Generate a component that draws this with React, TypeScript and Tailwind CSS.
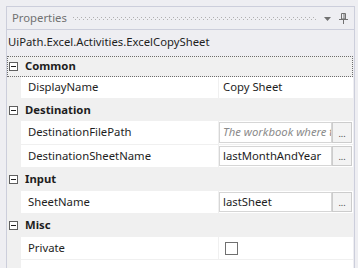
import React from 'react';

const font = { fontFamily: '"Segoe UI", "Noto Sans", sans-serif' };

const CategoryRow = ({ label, focused = false, h = 'h-[22px]' }: { label: string; focused?: boolean; h?: string }) => (
  <div className={`${h} flex items-center bg-[#f0f0f0] pl-[2px] ${focused ? 'outline-1 outline-dotted outline-[#6d6d6d] -outline-offset-1' : ''}`}>
    <div className="w-[9px] h-[9px] border border-[#5f5f5f] bg-white flex items-center justify-center">
      <div className="w-[5px] h-px bg-[#1e1e1e]" />
    </div>
    <span className="ml-[7px] text-[11.3px] font-bold text-[#1e1e1e]">{label}</span>
  </div>
);

const PropRow = ({ label, h = 'h-[22px]', children }: { label: string; h?: string; children?: React.ReactNode }) => (
  <div className={`${h} flex bg-[#f0f0f0]`}>
    <div className="w-[14px] shrink-0" />
    <div className="flex-1 min-w-0 flex bg-white border-b border-[#f0f0f0]">
      <div className="w-[198px] shrink-0 flex items-center pl-[7px] text-[11.3px] text-[#1e1e1e] border-r border-[#f0f0f0]">{label}</div>
      <div className="flex-1 min-w-0 flex items-center">{children}</div>
    </div>
  </div>
);

const TextBox = ({ children, italic = false }: { children: React.ReactNode; italic?: boolean }) => (
  <div className="flex-1 min-w-0 flex items-stretch h-full py-[1px] pr-[1px]">
    <div className={`flex-1 min-w-0 border border-[#d6d6d6] bg-white flex items-center pl-[3px] text-[11.3px] overflow-hidden whitespace-nowrap ${italic ? 'italic text-[#8a8a8a]' : 'text-[#1e1e1e]'}`}>
      {children}
    </div>
    <div className="w-[20px] shrink-0 border border-[#cccccc] bg-[#f3f3f3] flex items-end justify-center pb-[4px] text-[9px] leading-none text-[#444]">...</div>
  </div>
);

export default function App() {
  return (
    <div className="w-[358px] h-[268px] bg-[#eeeef2] pt-[6px] pl-[6px] pr-[3px] overflow-hidden" style={font}>
      <div className="h-full border-l border-t border-r border-[#cccedb] flex flex-col">
        <div className="h-[23px] flex items-center pt-[1px] pl-[5px] pr-[6px] gap-[6px] border-b border-[#cccedb]">
          <span className="text-[11.3px] text-[#717171]">Properties</span>
          <svg className="flex-1 h-[4px]" preserveAspectRatio="none">
            <defs>
              <pattern id="grip" width="4" height="4" patternUnits="userSpaceOnUse">
                <rect x="0" y="0" width="1" height="1" fill="#b0b0b0" />
                <rect x="2" y="2" width="1" height="1" fill="#b0b0b0" />
              </pattern>
            </defs>
            <rect width="100%" height="100%" fill="url(#grip)" />
          </svg>
          <svg width="7" height="4" viewBox="0 0 7 4" className="ml-[2px]">
            <path d="M0 0 H7 L3.5 4 Z" fill="#717171" />
          </svg>
          <svg width="9" height="11" viewBox="0 0 9 11" className="ml-[2px]">
            <path d="M2.5 0.5 H6.5 V6 H2.5 Z" fill="none" stroke="#717171" />
            <path d="M5 1 V6" stroke="#717171" />
            <path d="M0 6.5 H9" stroke="#717171" />
            <path d="M4.5 7 V11" stroke="#717171" />
          </svg>
        </div>
        <div className="h-[26px] flex items-center pb-[2px] pl-[1px] text-[11.3px] text-[#1e1e1e] whitespace-nowrap">
          UiPath.Excel.Activities.ExcelCopySheet
        </div>
        <div className="flex-1 flex flex-col mr-[1px] bg-white">
          <CategoryRow label="Common" focused h="h-[21px]" />
          <PropRow label="DisplayName">
            <span className="pl-[4px] text-[11.3px] text-[#1e1e1e]">Copy Sheet</span>
          </PropRow>
          <CategoryRow label="Destination" />
          <PropRow label="DestinationFilePath" h="h-[24px]">
            <TextBox italic>The workbook where the sheet will be copied</TextBox>
          </PropRow>
          <PropRow label="DestinationSheetName" h="h-[23px]">
            <TextBox>lastMonthAndYear</TextBox>
          </PropRow>
          <CategoryRow label="Input" h="h-[23px]" />
          <PropRow label="SheetName" h="h-[23px]">
            <TextBox>lastSheet</TextBox>
          </PropRow>
          <CategoryRow label="Misc" h="h-[23px]" />
          <PropRow label="Private" h="h-[23px]">
            <div className="ml-[6px] w-[13px] h-[13px] border border-[#707070] bg-white" />
          </PropRow>
          <div className="flex-1 flex">
            <div className="w-[14px] bg-[#f0f0f0]" />
          </div>
        </div>
      </div>
    </div>
  );
}
